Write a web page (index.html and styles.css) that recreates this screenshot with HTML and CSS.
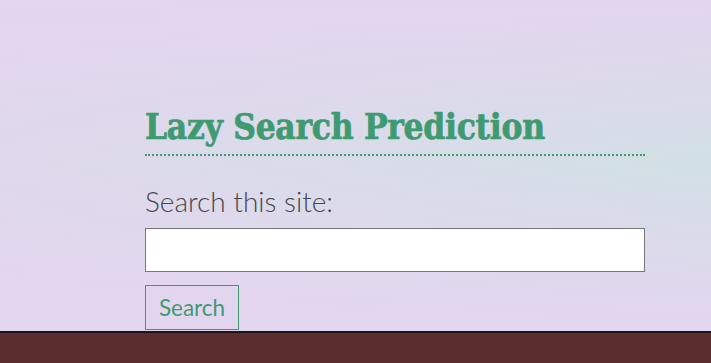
FILE: index.html
```html
<!DOCTYPE html>
<html>
<head>
<meta charset="utf-8">
<link rel="stylesheet" href="styles.css">
</head>
<body>
<main class="page">
  <section class="content">
    <h1 class="title">Lazy Search Prediction</h1>
    <form class="search">
      <label class="label" for="q">Search this site:</label>
      <input class="field" id="q" type="text">
      <button class="btn" type="button">Search</button>
    </form>
  </section>
</main>
<footer class="footer"></footer>
</body>
</html>
```

FILE: styles.css
```css
html, body {
  margin: 0;
  padding: 0;
  height: 100%;
}
body {
  display: flex;
  flex-direction: column;
  background:
    linear-gradient(to right, rgba(229, 213, 240, 0.65) 0%, rgba(229, 213, 240, 0) 100%),
    linear-gradient(to bottom, #e4d5ef 0%, #d2e0e5 45%, #dcdaeb 70%, #e4d5f0 92%);
  font-family: Lato, "Open Sans", sans-serif;
  overflow: hidden;
}
.page {
  flex: 0 0 331px;
  display: flex;
  justify-content: flex-start;
  padding-left: 145px;
  box-sizing: border-box;
}
.content {
  width: 500px;
  padding-top: 104px;
}
.title {
  margin: 0;
  font-family: "DejaVu Serif Condensed", "DejaVu Serif", serif;
  font-weight: bold;
  font-size: 35px;
  letter-spacing: -0.3px;
  -webkit-text-stroke: 0.7px #3f9a72;
  color: #3f9a72;
  line-height: 46px;
  padding-bottom: 4px;
  border-bottom: 2px dotted #3f9a72;
}
.search {
  display: flex;
  flex-direction: column;
  align-items: flex-start;
  padding-top: 29px;
}
.label {
  font-family: Lato, sans-serif;
  font-weight: 300;
  font-size: 28px;
  line-height: 34px;
  color: #46464e;
  margin-top: -1px;
  margin-bottom: 10px;
}
.field {
  width: 500px;
  height: 44px;
  box-sizing: border-box;
  border: 1px solid #777;
  background: #fff;
  margin: 0;
}
.btn {
  margin-top: 13px;
  height: 45px;
  width: 94px;
  box-sizing: border-box;
  background: transparent;
  border: 1px solid #3f9a72;
  color: #3f9a72;
  font-family: Lato, sans-serif;
  font-size: 22.5px;
  padding: 0;
}
.footer {
  flex: 1;
  background: #5a2e2e;
  border-top: 2px solid #1e1414;
}
```
